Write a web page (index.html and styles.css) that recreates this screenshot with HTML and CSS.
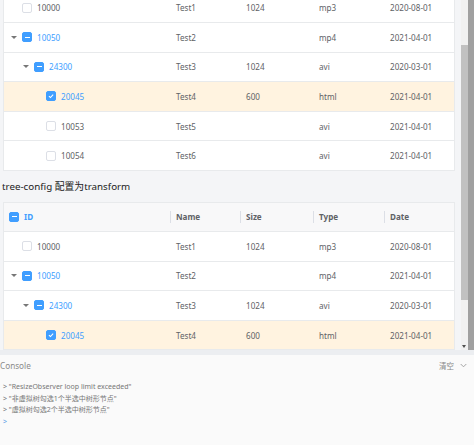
FILE: index.html
```html
<!DOCTYPE html>
<html>
<head>
<meta charset="utf-8">
<link rel="stylesheet" href="styles.css">
</head>
<body>
<div class="app">
  <div class="preview">
    <div class="viewport">
      <div class="content">
        <div class="table">
          <div class="row">
            <div class="cell id"><span class="indent l0"></span><span class="toggle"></span><span class="cb"></span><span class="idtext">10000</span></div>
            <div class="cell">Test1</div><div class="cell">1024</div><div class="cell">mp3</div><div class="cell">2020-08-01</div>
          </div>
          <div class="row">
            <div class="cell id"><span class="indent l0"></span><span class="toggle"><i class="tri"></i></span><span class="cb half"><i class="dash"></i></span><span class="idtext on">10050</span></div>
            <div class="cell">Test2</div><div class="cell"></div><div class="cell">mp4</div><div class="cell">2021-04-01</div>
          </div>
          <div class="row">
            <div class="cell id"><span class="indent l1"></span><span class="toggle"><i class="tri"></i></span><span class="cb half"><i class="dash"></i></span><span class="idtext on">24300</span></div>
            <div class="cell">Test3</div><div class="cell">1024</div><div class="cell">avi</div><div class="cell">2020-03-01</div>
          </div>
          <div class="row checked">
            <div class="cell id"><span class="indent l2"></span><span class="toggle"></span><span class="cb on"><svg viewBox="0 0 10 10"><path d="M2.4 5.1 L4.3 7 L7.7 3.2" /></svg></span><span class="idtext on">20045</span></div>
            <div class="cell">Test4</div><div class="cell">600</div><div class="cell">html</div><div class="cell">2021-04-01</div>
          </div>
          <div class="row">
            <div class="cell id"><span class="indent l2"></span><span class="toggle"></span><span class="cb"></span><span class="idtext">10053</span></div>
            <div class="cell">Test5</div><div class="cell"></div><div class="cell">avi</div><div class="cell">2021-04-01</div>
          </div>
          <div class="row">
            <div class="cell id"><span class="indent l2"></span><span class="toggle"></span><span class="cb"></span><span class="idtext">10054</span></div>
            <div class="cell">Test6</div><div class="cell"></div><div class="cell">avi</div><div class="cell">2021-04-01</div>
          </div>
        </div>

        <h3 class="title">tree-config 配置为transform</h3>

        <div class="table bordered-top">
          <div class="row head">
            <div class="cell hid"><span class="cb half"><i class="dash"></i></span><span class="idtext on">ID</span></div>
            <div class="cell hc">Name</div><div class="cell hc">Size</div><div class="cell hc">Type</div><div class="cell hc">Date</div>
          </div>
          <div class="row">
            <div class="cell id"><span class="indent l0"></span><span class="toggle"></span><span class="cb"></span><span class="idtext">10000</span></div>
            <div class="cell">Test1</div><div class="cell">1024</div><div class="cell">mp3</div><div class="cell">2020-08-01</div>
          </div>
          <div class="row">
            <div class="cell id"><span class="indent l0"></span><span class="toggle"><i class="tri"></i></span><span class="cb half"><i class="dash"></i></span><span class="idtext on">10050</span></div>
            <div class="cell">Test2</div><div class="cell"></div><div class="cell">mp4</div><div class="cell">2021-04-01</div>
          </div>
          <div class="row">
            <div class="cell id"><span class="indent l1"></span><span class="toggle"><i class="tri"></i></span><span class="cb half"><i class="dash"></i></span><span class="idtext on">24300</span></div>
            <div class="cell">Test3</div><div class="cell">1024</div><div class="cell">avi</div><div class="cell">2020-03-01</div>
          </div>
          <div class="row checked">
            <div class="cell id"><span class="indent l2"></span><span class="toggle"></span><span class="cb on"><svg viewBox="0 0 10 10"><path d="M2.4 5.1 L4.3 7 L7.7 3.2" /></svg></span><span class="idtext on">20045</span></div>
            <div class="cell">Test4</div><div class="cell">600</div><div class="cell">html</div><div class="cell">2021-04-01</div>
          </div>
        </div>
      </div>
    </div>
    <div class="vscroll">
      <div class="thumb"></div>
      <i class="arrow-down"></i>
    </div>
    <div class="edge"></div>
  </div>
  <div class="splitter"></div>
  <div class="console">
    <div class="console-head">
      <span class="console-title">Console</span>
      <span class="console-actions">清空 <svg class="chev" viewBox="0 0 8 5"><path d="M0.8 0.8 L4 4 L7.2 0.8" /></svg></span>
    </div>
    <div class="log">
      <div class="line">&gt; "ResizeObserver loop limit exceeded"</div>
      <div class="line">&gt; "非虚拟树勾选1个半选中树形节点"</div>
      <div class="line">&gt; "虚拟树勾选2个半选中树形节点"</div>
      <div class="line prompt">&gt;</div>
    </div>
  </div>
</div>
</body>
</html>
```

FILE: styles.css
```css
* { box-sizing: border-box; }
html, body {
  margin: 0;
  padding: 0;
  width: 474px;
  height: 445px;
  overflow: hidden;
  font-family: "Noto Sans", "Noto Sans CJK SC", sans-serif;
  background: #fafafa;
}
.app {
  display: flex;
  flex-direction: column;
  height: 445px;
}
.preview {
  height: 350px;
  display: flex;
  flex-direction: row;
  flex: none;
}
.viewport {
  flex: 1;
  overflow: hidden;
  background: #f4f5f7;
}
.content {
  margin-top: -6.6px;
  padding: 0 6px 0 3px;
}
.table {
  background: #fff;
  border-left: 1px solid #e8eaec;
  border-right: 1px solid #e8eaec;
  font-size: 8.1px;
  color: #606266;
}
.bordered-top {
  border-top: 1px solid #e8eaec;
}
.row {
  display: grid;
  grid-template-columns: 166px 70px 73px 71px 1fr;
  height: 29.6px;
  border-bottom: 1px solid #e8eaec;
  align-items: center;
}
.row.checked {
  background: #fff3e0;
}
.row.head {
  background: #f8f8f9;
  height: 29px;
}
.cell {
  padding-left: 6px;
  white-space: nowrap;
  display: flex;
  align-items: center;
  height: 100%;
  position: relative;
}
.cell.id {
  padding-left: 7px;
}
.cell.hid {
  padding-left: 5px;
  font-weight: 700;
}
.cell.hc {
  font-weight: 700;
}
.cell.hc::before {
  content: "";
  position: absolute;
  left: 0;
  top: 8px;
  bottom: 8px;
  width: 1px;
  background: #dcdfe6;
}
.indent { display: inline-block; flex: none; }
.indent.l0 { width: 0; }
.indent.l1 { width: 12px; }
.indent.l2 { width: 24px; }
.toggle {
  width: 11px;
  flex: none;
  display: flex;
  align-items: center;
}
.tri {
  display: block;
  width: 0;
  height: 0;
  border-left: 3px solid transparent;
  border-right: 3px solid transparent;
  border-top: 3.5px solid #777;
}
.cb {
  width: 10px;
  height: 10px;
  flex: none;
  border: 1px solid #dcdfe6;
  border-radius: 2px;
  background: #fff;
  display: flex;
  align-items: center;
  justify-content: center;
  margin-right: 5px;
}
.cb.half, .cb.on {
  background: #409eff;
  border-color: #409eff;
}
.dash {
  display: block;
  width: 5px;
  height: 1px;
  background: #fff;
}
.cb svg {
  width: 10px;
  height: 10px;
  fill: none;
  stroke: #fff;
  stroke-width: 1.3;
}
.idtext.on {
  color: #409eff;
}
.title {
  margin: 0;
  height: 31px;
  line-height: 31px;
  font-size: 9.8px;
  font-weight: 400;
  color: #222;
  margin-left: -1px;
}
.vscroll {
  width: 7px;
  flex: none;
  background: #f1f1f1;
  position: relative;
}
.thumb {
  position: absolute;
  left: 0;
  right: 0;
  top: 45px;
  height: 255px;
  background: #c1c1c1;
}
.arrow-down {
  position: absolute;
  left: 1px;
  bottom: 2px;
  width: 0;
  height: 0;
  border-left: 2.5px solid transparent;
  border-right: 2.5px solid transparent;
  border-top: 3px solid #505050;
}
.edge {
  width: 6px;
  flex: none;
  background: #a0a0a0;
}
.splitter {
  height: 5px;
  flex: none;
  background: #eceef1;
}
.console {
  flex: 1;
  background: #fafafa;
  padding: 0 3px 0 0;
}
.console-head {
  display: flex;
  justify-content: space-between;
  align-items: center;
  height: 21px;
}
.console-title {
  font-size: 8.2px;
  color: #8a8a8a;
}
.console-actions {
  font-size: 7.5px;
  color: #888;
  display: flex;
  align-items: center;
  gap: 6px;
  padding-right: 4px;
}
.chev {
  width: 7px;
  height: 5px;
  fill: none;
  stroke: #999;
  stroke-width: 1;
}
.log {
  padding: 5px 0 0 3px;
}
.line {
  font-size: 7px;
  line-height: 11.6px;
  height: 11.6px;
  color: #777;
  white-space: nowrap;
}
.line.prompt {
  color: #5b9de6;
}
```
